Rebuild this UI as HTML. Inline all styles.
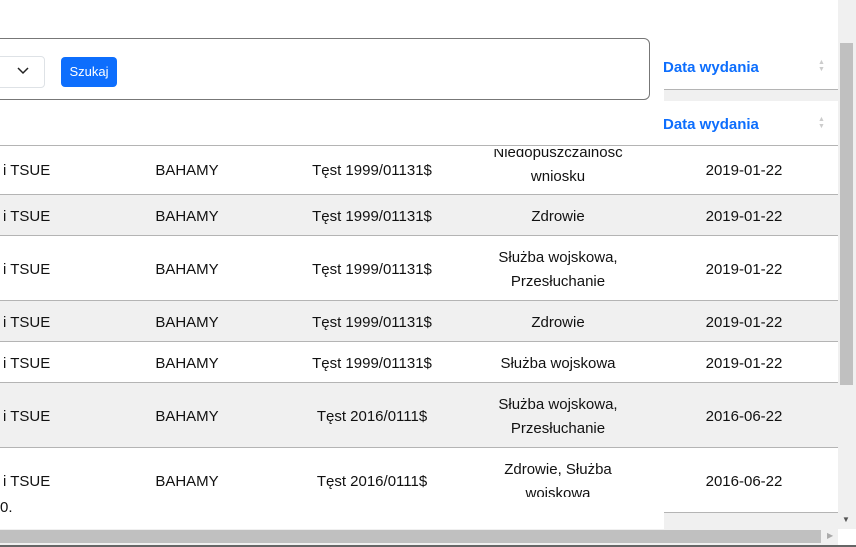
<!DOCTYPE html>
<html><head><meta charset="utf-8"><style>
*{margin:0;padding:0;box-sizing:border-box}
body{width:856px;height:547px;overflow:hidden;background:#fff;position:relative;font-family:"Liberation Sans",sans-serif;font-size:15px;color:#111}
.a{position:absolute}
.row{position:absolute;left:0;width:838px;border-top:1px solid #b4b4b4}
.g{background:#f0f0f0}
.c{position:absolute;text-align:center;line-height:24px;transform:translateY(-50%);margin-top:2px}
.h{color:#0d6efd;font-weight:bold;font-size:15px}
.sort{position:absolute;color:#ccc;font-size:7px;line-height:7px}
</style></head><body>
<div class="a" style="left:-20px;top:38px;width:670px;height:62px;border:1.5px solid #777;border-radius:6px"></div>
<div class="a" style="left:-20px;top:56px;width:65px;height:32px;border:1px solid #dee2e6;border-radius:4px"></div>
<svg class="a" style="left:17px;top:66px" width="12" height="10"><path d="M1 2 L6 7 L11 2" stroke="#222" stroke-width="1.5" fill="none"/></svg>
<div class="a" style="left:61px;top:57px;width:56px;height:30px;background:#0d6efd;border-radius:4px;color:#fff;font-size:13px;line-height:30px;text-align:center">Szukaj</div>
<div class="a h" style="left:663px;top:59px">Data wydania</div>
<div class="sort" style="left:818px;top:59px">▲<br>▼</div>
<div class="a" style="left:664px;top:89px;width:174px;height:12px;background:#f0f0f0;border-top:1px solid #b4b4b4"></div>
<div class="a h" style="left:663px;top:116px">Data wydania</div>
<div class="sort" style="left:818px;top:116px">▲<br>▼</div>

<div class="row" style="top:145px;height:49px"></div>
<div class="row g" style="top:194px;height:41px"></div>
<div class="row" style="top:235px;height:65px"></div>
<div class="row g" style="top:300px;height:41px"></div>
<div class="row" style="top:341px;height:41px"></div>
<div class="row g" style="top:382px;height:65px"></div>
<div class="row" style="top:447px;height:65px"></div>

<div id="cells"></div>
<script>
var rows=[[169,"Tęst 1999/01131$","Niedopuszczalność<br>wniosku","2019-01-22",163],[215,"Tęst 1999/01131$","Zdrowie","2019-01-22"],[268,"Tęst 1999/01131$","Służba wojskowa,<br>Przesłuchanie","2019-01-22"],[321,"Tęst 1999/01131$","Zdrowie","2019-01-22"],[362,"Tęst 1999/01131$","Służba wojskowa","2019-01-22"],[415,"Tęst 2016/0111$","Służba wojskowa,<br>Przesłuchanie","2016-06-22"],[480,"Tęst 2016/0111$","Zdrowie, Służba<br>wojskowa","2016-06-22"]];
var h="";rows.forEach(function(r){var y=r[0];var ky=r[4]||y;
h+='<div class="c" style="left:3px;top:'+y+'px">i TSUE</div>';
h+='<div class="c" style="left:117px;width:140px;top:'+y+'px">BAHAMY</div>';
h+='<div class="c" style="left:282px;width:180px;top:'+y+'px">'+r[1]+'</div>';
h+='<div class="c" style="left:458px;width:200px;top:'+ky+'px">'+r[2]+'</div>';
h+='<div class="c" style="left:684px;width:120px;top:'+y+'px">'+r[3]+'</div>';});
document.getElementById('cells').innerHTML=h;
</script>
<div class="a" style="left:0;top:146px;width:838px;height:3px;background:#fff"></div>
<div class="a" style="left:0;top:497px;width:664px;height:32px;background:#fff"></div>
<div class="a" style="left:0;top:498px;line-height:20px">0.</div>
<div class="a" style="left:664px;top:512px;width:174px;height:17px;background:#f0f0f0;border-top:1px solid #b4b4b4"></div>
<div class="a" style="left:838px;top:0;width:18px;height:529px;background:#f0f0f0"></div>
<div class="a" style="left:840px;top:43px;width:13px;height:342px;background:#c0c0c0"></div>
<div class="a" style="left:842px;top:515px;font-size:8px;color:#555">▼</div>
<div class="a" style="left:0;top:529px;width:838px;height:16px;background:#f0f0f0"></div>
<div class="a" style="left:0;top:530px;width:821px;height:13px;background:#c0c0c0"></div>
<div class="a" style="left:827px;top:531px;font-size:8px;color:#aaa">▶</div>
<div class="a" style="left:0;top:545px;width:856px;height:2px;background:#666"></div>
</body></html>
